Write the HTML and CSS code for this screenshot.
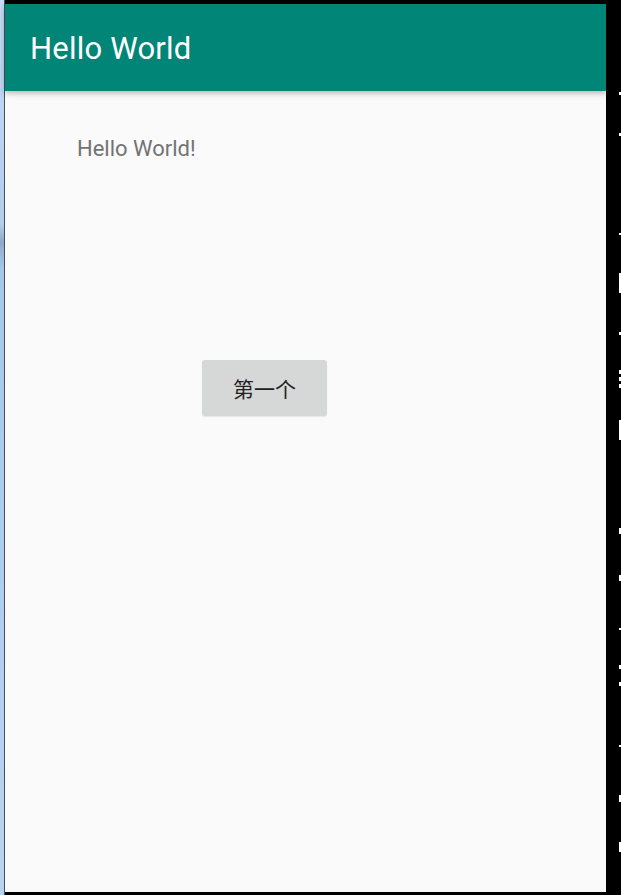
FILE: index.html
```html
<!DOCTYPE html>
<html>
<head>
<meta charset="utf-8">
<link rel="stylesheet" href="styles.css">
</head>
<body>
<div class="frame">
  <div class="edge"></div>
  <div class="phone">
    <header class="toolbar"><span class="title">Hello World</span></header>
    <main class="content">
      <p class="hello">Hello World!</p>
      <div class="btn-row"><button class="btn">第一个</button></div>
    </main>
  </div>
  <div class="gutter">
    <i class="mark" style="top:92px;height:3px"></i>
    <i class="mark" style="top:133px;height:3px"></i>
    <i class="mark" style="top:233px;height:2px"></i>
    <i class="mark" style="top:273px;height:20px"></i>
    <i class="mark" style="top:332px;height:3px"></i>
    <i class="mark" style="top:370px;height:4px"></i>
    <i class="mark" style="top:377px;height:4px"></i>
    <i class="mark" style="top:384px;height:4px"></i>
    <i class="mark" style="top:420px;height:20px"></i>
    <i class="mark" style="top:528px;height:6px"></i>
    <i class="mark" style="top:575px;height:6px"></i>
    <i class="mark" style="top:628px;height:2px"></i>
    <i class="mark" style="top:665px;height:4px"></i>
    <i class="mark" style="top:682px;height:4px"></i>
    <i class="mark" style="top:745px;height:2px"></i>
    <i class="mark" style="top:795px;height:7px"></i>
    <i class="mark" style="top:842px;height:10px"></i>
  </div>
</div>
</body>
</html>
```
FILE: styles.css
```css
html, body {
  margin: 0;
  padding: 0;
  background: #000;
  width: 621px;
  height: 895px;
  overflow: hidden;
}
.frame {
  display: flex;
  height: 895px;
}
.edge {
  width: 4px;
  background: linear-gradient(180deg, #c6dbf4 0%, #b4cdec 25%, #8fa9c8 27%, #a9c6ea 30%, #b9d3f2 100%);
  border-right: 1px solid #44505c;
  flex: none;
}
.phone {
  width: 601px;
  height: 888px;
  margin-top: 4px;
  background: #fafafa;
  display: flex;
  flex-direction: column;
  flex: none;
  font-family: Roboto, "Noto Sans CJK SC", sans-serif;
}
.toolbar {
  height: 87px;
  background: #008577;
  box-shadow: 0 2px 6px rgba(0, 0, 0, 0.3);
  display: flex;
  align-items: center;
  padding-left: 25px;
  padding-top: 2px;
  box-sizing: border-box;
  position: relative;
  z-index: 1;
  flex: none;
}
.title {
  color: #fff;
  font-size: 31px;
  font-weight: 400;
  letter-spacing: 0.2px;
}
.content {
  flex: 1;
  padding: 0 0 0 72px;
}
.hello {
  margin: 45px 0 0;
  font-size: 22px;
  line-height: 26px;
  color: #737373;
}
.btn-row {
  padding-left: 125px;
  margin-top: 198px;
}
.btn {
  width: 125px;
  height: 56px;
  border: none;
  border-radius: 3px;
  background: #d6d7d7;
  color: #222;
  font-family: Roboto, "Noto Sans CJK SC", sans-serif;
  font-size: 21px;
  padding: 0;
  box-shadow: 0 1px 1px rgba(0,0,0,0.08);
}
.gutter {
  position: relative;
  flex: 1;
}
.mark {
  position: absolute;
  right: 0;
  width: 2px;
  background: #fff;
}
```
